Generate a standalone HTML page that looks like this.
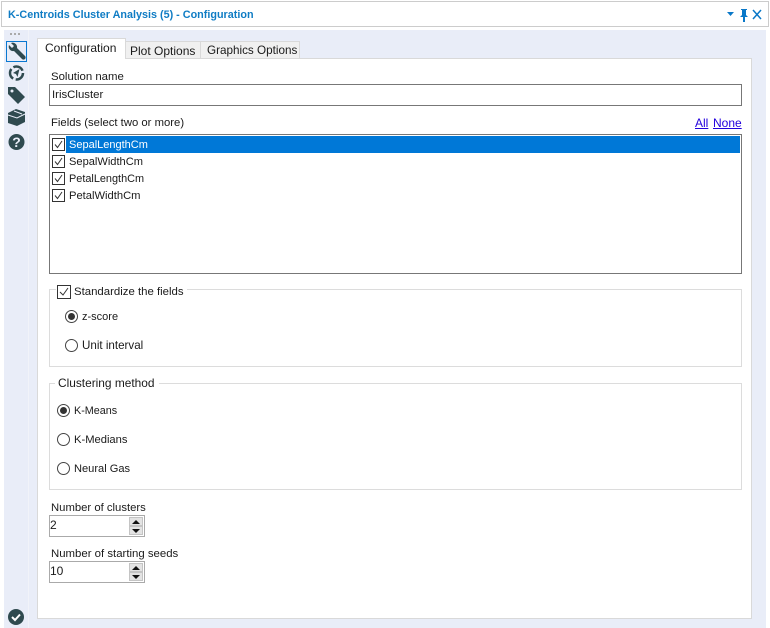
<!DOCTYPE html>
<html><head><meta charset="utf-8"><style>
html,body{margin:0;padding:0}
body{width:770px;height:628px;position:relative;overflow:hidden;background:#fff;font-family:"Liberation Sans",sans-serif;font-size:11.3px;color:#1a1a1a}
.a{position:absolute;box-sizing:border-box}
.t{position:absolute;white-space:nowrap;line-height:14px}
.ck{position:absolute;width:13px;height:13px;border:1px solid #333;box-sizing:border-box;background:#fff}
.ck svg{position:absolute;left:0;top:0}
.r{position:absolute;width:13px;height:13px;border:1px solid #444;border-radius:50%;box-sizing:border-box;background:#fff}
.r.on:after{content:"";position:absolute;left:2px;top:2px;width:7px;height:7px;background:#333;border-radius:50%}
.spin{position:absolute;width:96px;height:22px;border:1px solid #aaa;box-sizing:border-box;background:#fff}
.sb{position:absolute;left:79px;width:14px;height:9px;background:#e3e3e3;border:1px solid #c4c4c4;box-sizing:border-box}
.sb i{position:absolute;left:2px;width:0;height:0;border-left:4px solid transparent;border-right:4px solid transparent}
</style></head><body>
<div class="a" style="left:4px;top:30px;width:762px;height:598px;background:#e9edf8"></div>
<div class="a" style="left:28px;top:30px;width:1px;height:598px;background:#f1f3f9"></div>
<div class="a" style="left:1px;top:1px;width:768px;height:26px;border:1px solid #ccc;background:#fff"></div>
<div class="t" style="left:8px;top:8px;font-weight:bold;font-size:10.8px;color:#0f7cc4">K-Centroids Cluster Analysis (5) - Configuration</div>
<svg class="a" style="left:725px;top:8px" width="40" height="14" viewBox="0 0 40 14"><path d="M2 4h7l-3.500 4z" fill="#0a78c8"/><path d="M16 1h6v1h-1v5l2 2h-3v5h-2V9h-3l2-2V2h-1z" fill="#0a78c8"/><path d="M28 2l8 9M36 2l-8 9" stroke="#0a78c8" stroke-width="1.500" fill="none"/></svg>
<svg class="a" style="left:10px;top:33px" width="10" height="2"><path d="M0 0h2v2H0zM4 0h2v2H4zM8 0h2v2H8z" fill="#aaa"/></svg>
<div class="a" style="left:6px;top:41px;width:21px;height:21px;border:1px solid #0a78d0"></div>
<svg class="a" style="left:5px;top:40px" width="24" height="114" viewBox="0 0 24 114">
<path d="M4 5a4.500 4.500 0 0 0 5 6l8 8a2 2 0 0 0 3-3l-8-8a4.500 4.500 0 0 0-6-5l3 3-2 2z" fill="#2f4a4f"/>
<circle cx="11.500" cy="33" r="6.500" fill="none" stroke="#2f4a4f" stroke-width="2.500" stroke-dasharray="11 2.600"/>
<path d="M14.500 29l-2 8-1.500-3-3-1z" fill="#2f4a4f"/>
<path d="M3 47h7l10 10-7 7L3 54z" fill="#2f4a4f"/><circle cx="7" cy="51" r="1.500" fill="#e9edf8"/>
<path d="M3 73l8-4 9 3v10l-8 4-9-3z" fill="#2f4a4f"/><path d="M3 75l9 3 8-4M9 71l8 3" stroke="#e9edf8" stroke-width="1" fill="none"/>
<circle cx="11.500" cy="102" r="8" fill="#2f4a4f"/>
<text x="11.500" y="107" font-family="Liberation Sans" font-weight="bold" font-size="14" fill="#e9edf8" text-anchor="middle">?</text>
</svg>
<svg class="a" style="left:8px;top:609px" width="16" height="16" viewBox="0 0 16 16"><circle cx="8" cy="8" r="8" fill="#2f4a4f"/><path d="M4 8l3 3 5-5.500" stroke="#fff" stroke-width="2" fill="none"/></svg>
<div class="a" style="left:37px;top:58px;width:715px;height:561px;background:#fff;border:1px solid #d9d9d9"></div>
<div class="a" style="left:125px;top:41px;width:76px;height:18px;background:#f0f0f0;border:1px solid #d9d9d9"></div>
<div class="a" style="left:200px;top:41px;width:100px;height:18px;background:#f0f0f0;border:1px solid #d9d9d9"></div>
<div class="a" style="left:37px;top:38px;width:89px;height:21px;background:#fff;border:1px solid #d9d9d9;border-bottom:none"></div>
<div class="t" style="left:45px;top:41px;font-size:12px">Configuration</div>
<div class="t" style="left:130px;top:44px;font-size:12px">Plot Options</div>
<div class="t" style="left:207px;top:44px;font-size:11.7px">Graphics Options</div>
<div class="t" style="left:51px;top:70px;font-size:11.4px">Solution name</div>
<div class="a" style="left:49px;top:84px;width:693px;height:22px;border:1px solid #777;background:#fff"></div>
<div class="t" style="left:52px;top:88px;font-size:11.4px">IrisCluster</div>
<div class="t" style="left:51px;top:116px;font-size:11.3px">Fields (select two or more)</div>
<div class="t" style="left:695px;top:116px;font-size:12px;color:#2200dd;text-decoration:underline">All</div>
<div class="t" style="left:713px;top:116px;font-size:12px;color:#2200dd;text-decoration:underline">None</div>
<div class="a" style="left:49px;top:134px;width:693px;height:140px;border:1px solid #777;background:#fff"></div>
<div class="a" style="left:66px;top:136px;width:674px;height:17px;background:#0078d7"></div>
<div class="ck" style="left:52px;top:138px"><svg width="11" height="11"><path d="M2 5.500l2.500 3L9 2" stroke="#333" fill="none"/></svg></div>
<div class="t" style="left:69px;top:138px;color:#fff;font-size:11px">SepalLengthCm</div>
<div class="ck" style="left:52px;top:155px"><svg width="11" height="11"><path d="M2 5.500l2.500 3L9 2" stroke="#333" fill="none"/></svg></div>
<div class="t" style="left:69px;top:155px;font-size:11.1px">SepalWidthCm</div>
<div class="ck" style="left:52px;top:172px"><svg width="11" height="11"><path d="M2 5.500l2.500 3L9 2" stroke="#333" fill="none"/></svg></div>
<div class="t" style="left:69px;top:172px;font-size:10.9px">PetalLengthCm</div>
<div class="ck" style="left:52px;top:189px"><svg width="11" height="11"><path d="M2 5.500l2.500 3L9 2" stroke="#333" fill="none"/></svg></div>
<div class="t" style="left:69px;top:189px;font-size:11.2px">PetalWidthCm</div>
<div class="a" style="left:49px;top:289px;width:693px;height:78px;border:1px solid #dcdcdc"></div>
<div class="a" style="left:56px;top:285px;width:131px;height:10px;background:#fff"></div>
<div class="ck" style="left:57px;top:285px;width:14px;height:14px"><svg width="12" height="12"><path d="M2 6l3 3 5-7" stroke="#333" fill="none"/></svg></div>
<div class="t" style="left:74px;top:285px;font-size:11.4px">Standardize the fields</div>
<div class="r on" style="left:65px;top:310px"></div>
<div class="t" style="left:82px;top:310px;font-size:11px">z-score</div>
<div class="r" style="left:65px;top:339px"></div>
<div class="t" style="left:82px;top:339px;font-size:11.6px">Unit interval</div>
<div class="a" style="left:49px;top:383px;width:693px;height:107px;border:1px solid #dcdcdc"></div>
<div class="a" style="left:55px;top:379px;width:104px;height:10px;background:#fff"></div>
<div class="t" style="left:58px;top:376px;font-size:11.9px">Clustering method</div>
<div class="r on" style="left:57px;top:404px"></div>
<div class="t" style="left:74px;top:404px;font-size:10.8px">K-Means</div>
<div class="r" style="left:57px;top:433px"></div>
<div class="t" style="left:74px;top:433px;font-size:11.2px">K-Medians</div>
<div class="r" style="left:57px;top:462px"></div>
<div class="t" style="left:74px;top:462px;font-size:11.1px">Neural Gas</div>
<div class="t" style="left:51px;top:501px;font-size:11.3px">Number of clusters</div>
<div class="spin" style="left:49px;top:515px"><div class="t" style="left:0;top:2px;font-size:12px">2</div>
<div class="sb" style="top:1px"><i style="top:2px;border-bottom:4px solid #111"></i></div><div class="sb" style="top:10px"><i style="top:2px;border-top:4px solid #111"></i></div></div>
<div class="t" style="left:51px;top:547px;font-size:11.4px">Number of starting seeds</div>
<div class="spin" style="left:49px;top:561px"><div class="t" style="left:0;top:2px;font-size:12px">10</div>
<div class="sb" style="top:1px"><i style="top:2px;border-bottom:4px solid #111"></i></div><div class="sb" style="top:10px"><i style="top:2px;border-top:4px solid #111"></i></div></div>
</body></html>
